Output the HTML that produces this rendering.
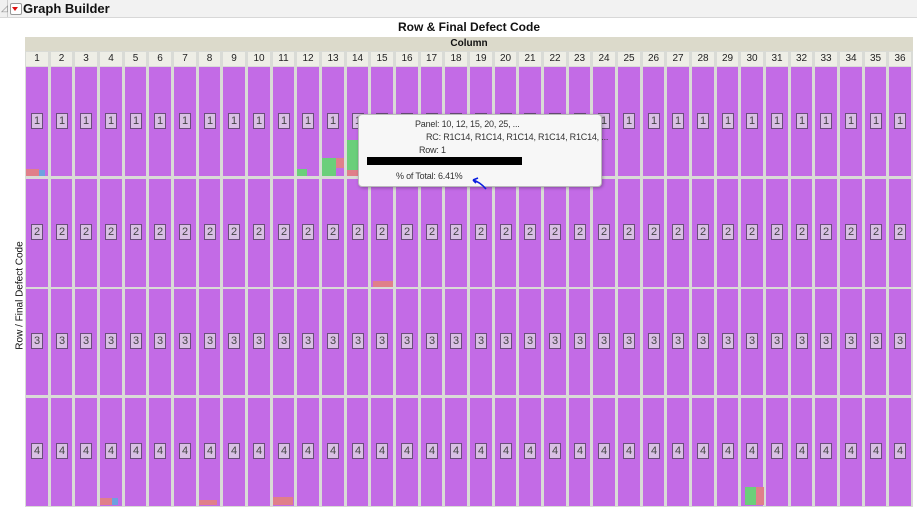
<!DOCTYPE html><html><head><style>
body{margin:0;width:917px;height:513px;background:#fff;font-family:"Liberation Sans",sans-serif;overflow:hidden;position:relative}
.a{position:absolute}
.lbl{position:absolute;width:10px;height:14px;border:1px solid #6a4e7a;background:#d9c0e4;font-size:11px;line-height:14px;text-align:center;color:#444;box-sizing:content-box}
</style></head><body>
<div class="a" style="left:0;top:0;width:917px;height:17px;background:#f0f0f0;border-bottom:1px solid #d8d8d8"></div>
<div class="a" style="left:7px;top:0;width:910px;height:17px;border-left:1px solid #ccc;background:#f2f2f2"></div>
<div class="a" style="left:1px;top:3px;font-size:9px;color:#888">◿</div>
<div class="a" style="left:10px;top:3px;width:10px;height:10px;border:1px solid #999;background:#fff;border-radius:2px"></div>
<div class="a" style="left:12px;top:7px;width:0;height:0;border-left:3px solid transparent;border-right:3px solid transparent;border-top:4px solid #d11"></div>
<div class="a" style="left:23px;top:1px;font-size:13px;font-weight:bold;color:#111">Graph Builder</div>
<div class="a" style="left:25px;top:20px;width:888px;text-align:center;font-size:12px;font-weight:bold;color:#111">Row &amp; Final Defect Code</div>
<div class="a" style="left:25px;top:37px;width:888px;height:14px;background:#dcdacb;text-align:center;font-size:10px;font-weight:bold;line-height:14px;color:#111">Column</div>
<div class="a" style="left:5px;top:230px;width:20px;height:150px"><div style="position:absolute;left:-60px;top:60px;width:150px;transform:rotate(-90deg);font-size:10px;text-align:center;color:#111">Row / Final Defect Code</div></div>
<div id="g" class="a" style="left:25px;top:51px;width:888px;height:456px;background:#d9dbd6"></div>
<div class="a" style="left:358px;top:114px;width:242px;height:71px;background:#f7f7f7;border:1px solid #bbb;border-radius:4px;box-shadow:1px 1px 3px rgba(0,0,0,.3);font-size:9px;color:#333;white-space:nowrap;letter-spacing:-0.2px">
<div class="a" style="left:56px;top:4px">Panel: 10, 12, 15, 20, 25, ...</div>
<div class="a" style="left:67px;top:17px">RC: R1C14, R1C14, R1C14, R1C14, R1C14, ...</div>
<div class="a" style="left:60px;top:30px">Row: 1</div>
<div class="a" style="left:8px;top:42px;width:155px;height:8px;background:#000"></div>
<div class="a" style="left:37px;top:56px">% of Total: 6.41%</div>
</div>
<svg class="a" style="left:470px;top:176px" width="24" height="16"><path d="M3 4 L8 2 M3 4 L6 7 M3 4 Q10 6 16 13" stroke="#0a1ee0" stroke-width="1.6" fill="none"/></svg>
<script>
var g=document.getElementById('g'),h='';
var W=888/36,rows=[[16,125],[128,236],[238,344],[347,455]];
for(var c=0;c<36;c++){var x=Math.round(c*W)+1,w=Math.round((c+1)*W)-Math.round(c*W)-3;
h+='<div class="a" style="left:'+x+'px;top:1px;width:'+w+'px;height:14px;background:#eeeee6;font-size:10px;line-height:14px;text-align:center;color:#222">'+(c+1)+'</div>';
for(var r=0;r<4;r++){var t=rows[r][0],b=rows[r][1];
h+='<div class="a" style="left:'+x+'px;top:'+t+'px;width:'+w+'px;height:'+(b-t)+'px;background:#c36be6"></div>';
h+='<div class="lbl" style="left:'+(x+Math.round(w/2)-6)+'px;top:'+(t+Math.round((b-t)/2)-9)+'px">'+(r+1)+'</div>';}}
g.innerHTML=h;
function blk(x,y,w,hh,c){g.insertAdjacentHTML('beforeend','<div class="a" style="left:'+(x-25)+'px;top:'+(y-51)+'px;width:'+w+'px;height:'+hh+'px;background:'+c+'"></div>')}
blk(26,169,13,7,'#e07f8a');blk(39,170,6,6,'#6ea0e0');blk(297,169,10,7,'#6bcf7a');blk(322,158,14,18,'#6bcf7a');blk(336,158,8,10,'#e07f8a');blk(347,140,12,30,'#6bcf7a');blk(347,170,12,6,'#e07f8a');
blk(373,281,20,6,'#e07f8a');blk(745,487,11,18,'#6bcf7a');blk(756,487,8,18,'#e07f8a');blk(100,498,12,7,'#e07f8a');blk(112,498,6,7,'#6ea0e0');blk(273,497,20,8,'#e07f8a');blk(199,500,18,5,'#e07f8a');
</script>
</body></html>
